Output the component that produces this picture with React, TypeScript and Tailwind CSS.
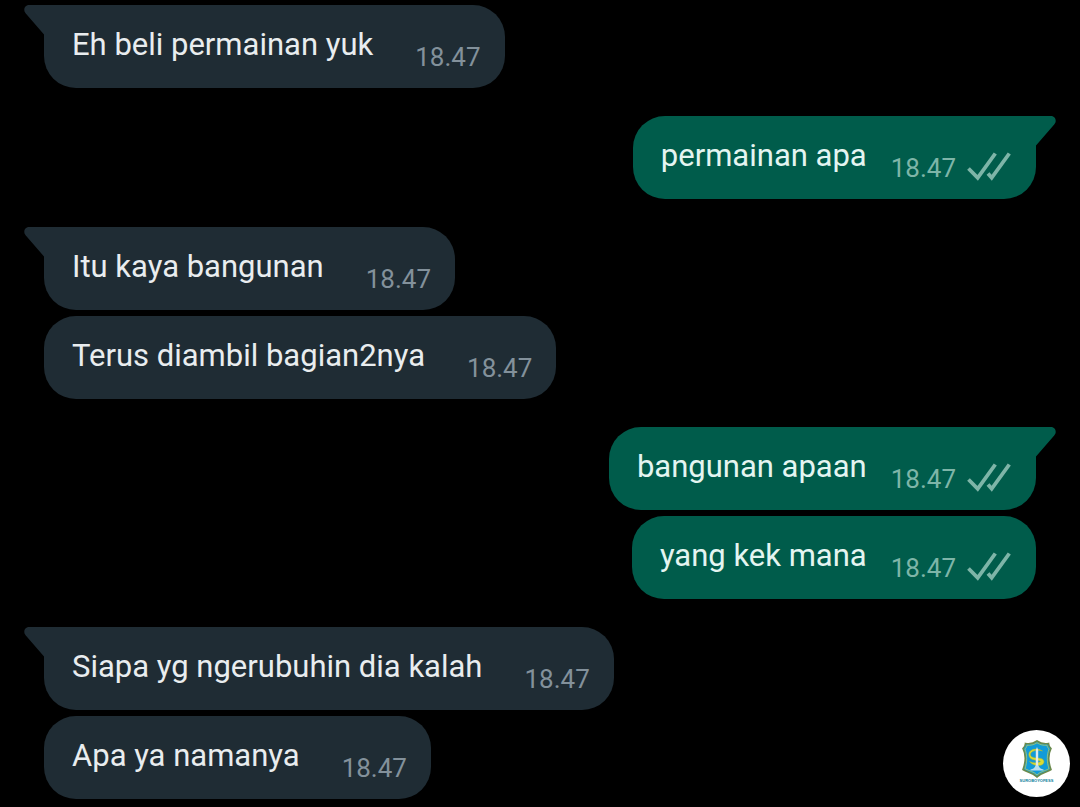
type Message = {
  text: string;
  sent?: boolean;
  tail?: boolean;
};

const messages: Message[] = [
  { text: "Eh beli permainan yuk", tail: true },
  { text: "permainan apa", sent: true, tail: true },
  { text: "Itu kaya bangunan", tail: true },
  { text: "Terus diambil bagian2nya" },
  { text: "bangunan apaan", sent: true, tail: true },
  { text: "yang kek mana", sent: true },
  { text: "Siapa yg ngerubuhin dia kalah", tail: true },
  { text: "Apa ya namanya" },
];

function Ticks() {
  return (
    <svg viewBox="0 0 46 32" className="ml-[11px] h-8 w-[46px]" fill="none" stroke="#7eb5a8" strokeWidth="3.8" role="img" aria-label="Delivered">
      <path d="M1.5 16.5 10.7 25.8 28.3 1.5" />
      <path d="M21 21.5 24.7 25.8 42.3 1.5" />
    </svg>
  );
}

function Bubble({ text, sent, tail }: Message) {
  const color = sent ? "bg-[#005c4b]" : "bg-[#1f2c34]";
  const side = sent ? "self-end pr-[23px]" : "self-start pr-6";
  const gap = tail ? "mt-7 first:mt-0" : "mt-[6px]";
  return (
    <li className={`relative flex h-[83px] items-start rounded-[32px] pl-7 pt-[21px] ${color} ${side} ${gap}`}>
      {tail && !sent && (
        <svg viewBox="0 0 56 36" className="absolute -left-5 top-0 h-9 w-14" fill="#1f2c34" aria-hidden="true">
          <path d="M5.500 0H56V36H20V29.500L1.800 8.500C-1.500 4.500 1 0 5.500 0Z" />
        </svg>
      )}
      {tail && sent && (
        <svg viewBox="0 0 56 36" className="absolute -right-5 top-0 h-9 w-14" fill="#005c4b" aria-hidden="true">
          <path d="M50.500 0H0V36H36V29.500L54.200 8.500C57.500 4.500 55 0 50.500 0Z" />
        </svg>
      )}
      <p className={`relative whitespace-nowrap text-[31px] leading-[38px] ${sent ? "mr-6 text-[#e4f5f1]" : "mr-[42px] text-[#e9edef]"}`}>{text}</p>
      <div className={`relative mt-[15px] flex items-center text-[26px] leading-8 ${sent ? "text-[#7eb5a8]" : "text-[#83919b]"}`}>
        <time>18.47</time>
        {sent && <Ticks />}
      </div>
    </li>
  );
}

function Watermark() {
  return (
    <div className="absolute bottom-[10px] right-[10px] flex h-[67px] w-[67px] flex-col items-center rounded-full bg-white pt-[10px]">
      <svg viewBox="0 0 30 38" className="h-[38px] w-[30px] shrink-0" aria-hidden="true">
        <path d="M15 1C12 3.200 8 4.200 3.500 3.500C3.500 5.500 2.500 7 1 8.500C3.800 14 3.800 22 1 29.500C5 32.500 11 32.500 15 37C19 32.500 25 32.500 29 29.500C26.200 22 26.200 14 29 8.500C27.500 7 26.500 5.500 26.500 3.500C22 4.200 18 3.200 15 1Z" fill="#129bd8" stroke="#6b8a4c" strokeWidth="1.600" />
        <path d="M15 2.800C12 4.800 8.500 5.600 5 5.200C4.700 7 4 8 2.900 9C5.300 15 5.300 22 3 28.700C7 31 12 31.500 15 35C18 31.500 23 31 27 28.700C24.700 22 24.700 15 27.100 9C26 8 25.300 7 25 5.200C21.500 5.600 18 4.800 15 2.800Z" fill="none" stroke="#c9d35a" strokeWidth="0.700" />
        <path d="M20.500 11C16 9.500 9.500 10.500 8.500 14C8 18.500 15 17.500 19 18.500C24 20 22.500 26 16 25.500C12 25.300 9.500 24 7.500 21.500C11 23 16 23.500 18.500 21.500C18 19.500 7 22 6.800 14.500C7 9 15 7.500 20.500 11Z" fill="#dcdc32" stroke="#a6b53a" strokeWidth="0.500" />
        <path d="M15 7 16.200 10V26H13.800V10Z" fill="#dfe8ec" />
        <path d="M13.500 25.500H16.500C17 28 19 29 21.500 29.500V30.500H8.500V29.500C11 29 13 28 13.500 25.500Z" fill="#b9dff0" />
      </svg>
      <span className="whitespace-nowrap font-['Liberation_Sans',sans-serif] text-[4px] font-bold leading-[6px] text-[#0b7f9b]">SUROBOYOFESS</span>
    </div>
  );
}

export default function App() {
  return (
    <main className="relative min-h-screen bg-black font-['Roboto',sans-serif]">
      <ul className="flex flex-col px-11 pb-2 pt-[5px]">
        {messages.map((message) => (
          <Bubble key={message.text} {...message} />
        ))}
      </ul>
      <Watermark />
    </main>
  );
}
